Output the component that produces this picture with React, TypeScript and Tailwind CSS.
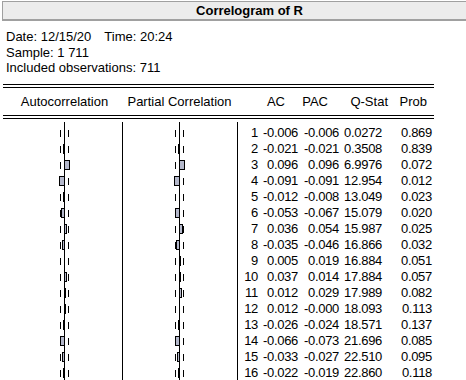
type Row = { lag: number; ac: string; pac: string; q: string; prob: string };

const rows: Row[] = [
  { lag: 1, ac: "-0.006", pac: "-0.006", q: "0.0272", prob: "0.869" },
  { lag: 2, ac: "-0.021", pac: "-0.021", q: "0.3508", prob: "0.839" },
  { lag: 3, ac: "0.096", pac: "0.096", q: "6.9976", prob: "0.072" },
  { lag: 4, ac: "-0.091", pac: "-0.091", q: "12.954", prob: "0.012" },
  { lag: 5, ac: "-0.012", pac: "-0.008", q: "13.049", prob: "0.023" },
  { lag: 6, ac: "-0.053", pac: "-0.067", q: "15.079", prob: "0.020" },
  { lag: 7, ac: "0.036", pac: "0.054", q: "15.987", prob: "0.025" },
  { lag: 8, ac: "-0.035", pac: "-0.046", q: "16.866", prob: "0.032" },
  { lag: 9, ac: "0.005", pac: "0.019", q: "16.884", prob: "0.051" },
  { lag: 10, ac: "0.037", pac: "0.014", q: "17.884", prob: "0.057" },
  { lag: 11, ac: "0.012", pac: "0.029", q: "17.989", prob: "0.082" },
  { lag: 12, ac: "0.012", pac: "-0.000", q: "18.093", prob: "0.113" },
  { lag: 13, ac: "-0.026", pac: "-0.024", q: "18.571", prob: "0.137" },
  { lag: 14, ac: "-0.066", pac: "-0.073", q: "21.696", prob: "0.085" },
  { lag: 15, ac: "-0.033", pac: "-0.027", q: "22.510", prob: "0.095" },
  { lag: 16, ac: "-0.022", pac: "-0.019", q: "22.860", prob: "0.118" },
];

const ROW_H = 16;
const FIRST = 11;
const SCALE = 56;
const BODY_H = 258;

// bar column of the correlogram
function Bars({ values, axis, width }: { values: number[]; axis: number; width: number }) {
  return (
    <svg width={width} height={BODY_H} className="block">
      <line x1={axis + 0.5} y1={0} x2={axis + 0.5} y2={BODY_H} stroke="#000" />
      {values.map((v, i) => {
        const cy = FIRST + i * ROW_H;
        const w = Math.round(Math.abs(v) * SCALE);
        return (
          <g key={i}>
            <line x1={axis - 3.5} y1={cy - 3} x2={axis - 3.5} y2={cy + 4} stroke="#000" />
            <line x1={axis + 4.5} y1={cy - 3} x2={axis + 4.5} y2={cy + 4} stroke="#000" />
            {w > 0 && (
              <rect
                x={(v < 0 ? axis - w : axis) + 0.5}
                y={cy - 4.5}
                width={w}
                height={9}
                fill="#b4b8cb"
                stroke="#000"
              />
            )}
          </g>
        );
      })}
    </svg>
  );
}

export default function App() {
  return (
    <div className="w-[466px] h-[380px] overflow-hidden bg-white text-black text-[13px] font-['Liberation_Sans',Arial,sans-serif]">
      <div className="ml-[2px] mt-[1px] h-[20px] border-t border-l border-b-2 border-[#a0a0a0] bg-[#ececec] flex items-center justify-center pl-[30px] font-bold">
        Correlogram of R
      </div>

      <div className="mt-[8px] pl-[6px] leading-[15.67px]">
        <div>
          <span>Date: 12/15/20</span>
          <span className="ml-[13px]">Time: 20:24</span>
        </div>
        <div>Sample: 1 711</div>
        <div>Included observations: 711</div>
      </div>

      <div className="mt-[8px] ml-[3px] w-[431px] h-[4px] border-y border-black" />
      <div className="ml-[3px] h-[27px] pt-[6px] flex leading-[15.67px]">
        <div className="w-[120px] pl-[3px] text-center">Autocorrelation</div>
        <div className="w-[115px] pr-[2px] text-center">Partial Correlation</div>
        <div className="w-[47px] text-right">AC</div>
        <div className="w-[43px] text-right">PAC</div>
        <div className="w-[60px] text-right">Q-Stat</div>
        <div className="w-[39px] text-right">Prob</div>
      </div>
      <div className="ml-[3px] w-[431px] h-[4px] border-y border-black" />

      <div className="mt-[3px] ml-[3px] flex h-[258px]">
        <div className="w-[120px] shrink-0 border-r border-black">
          <Bars values={rows.map((r) => parseFloat(r.ac))} axis={61} width={119} />
        </div>
        <div className="w-[115px] shrink-0 border-r border-black">
          <Bars values={rows.map((r) => parseFloat(r.pac))} axis={56} width={114} />
        </div>
        <div className="shrink-0 pt-[3px] leading-[16px] tracking-[-0.3px]">
          {rows.map((r) => (
            <div key={r.lag} className="flex h-[16px] whitespace-nowrap">
              <span className="w-[20px] shrink-0 text-right">{r.lag}</span>
              <span className="w-[40px] shrink-0 text-right">{r.ac}</span>
              <span className="w-[41px] shrink-0 text-right">{r.pac}</span>
              <span className="w-[43px] shrink-0 text-right">{r.q}</span>
              <span className="w-[50px] shrink-0 text-right">{r.prob}</span>
            </div>
          ))}
        </div>
      </div>
    </div>
  );
}
